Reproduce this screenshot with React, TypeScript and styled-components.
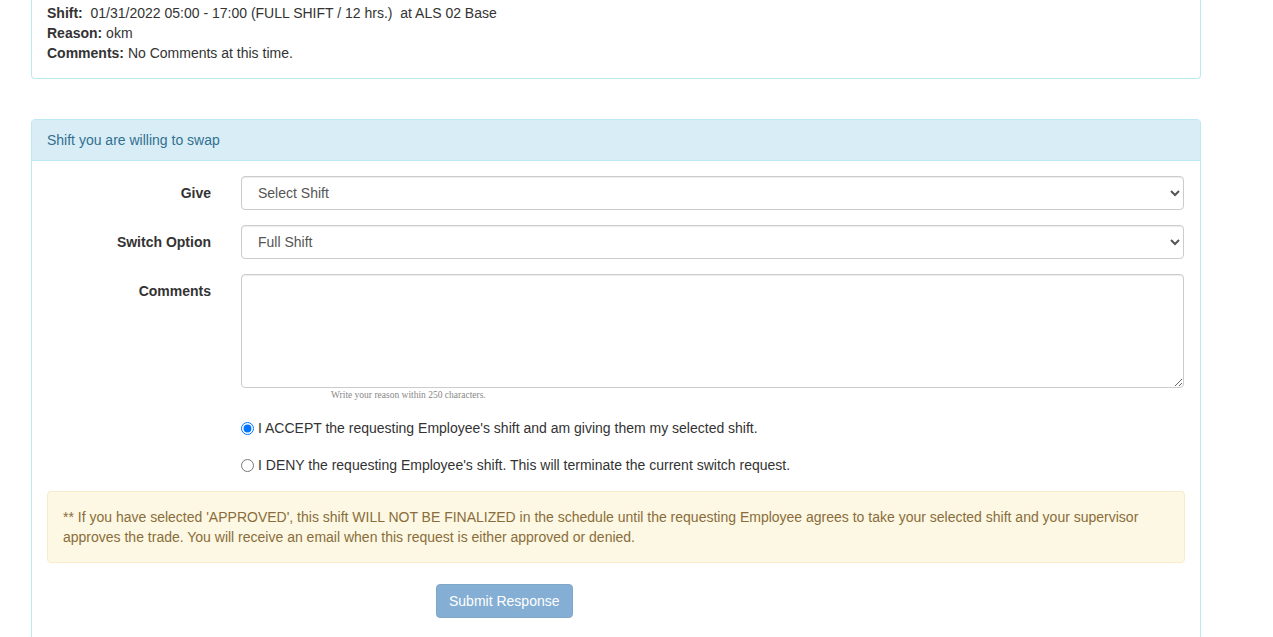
import React from 'react'
import styled, { createGlobalStyle } from 'styled-components'

const GlobalStyle = createGlobalStyle`
  html, body {
    margin: 0;
    padding: 0;
    background: #fff;
  }
  body {
    font-family: "Liberation Sans", Arial, Helvetica, sans-serif;
    font-size: 14px;
    line-height: 20px;
    color: #333;
  }
  * {
    box-sizing: border-box;
  }
`

const Page = styled.div`
  width: 1170px;
  margin-left: 31px;
`

const Panel = styled.div<{ $cutTop?: boolean }>`
  border: 1px solid #bce8f1;
  border-radius: 4px;
  background: #fff;
  margin-bottom: 40px;

  ${({ $cutTop }) =>
    $cutTop &&
    `
      border-top: none;
      border-top-left-radius: 0;
      border-top-right-radius: 0;
    `}
`

const PanelHeading = styled.div`
  background: #d9edf7;
  color: #31708f;
  padding: 10px 15px;
  border-bottom: 1px solid #bce8f1;
  border-top-left-radius: 3px;
  border-top-right-radius: 3px;
`

const PanelBody = styled.div<{ $top?: number }>`
  padding: ${({ $top = 15 }) => `${$top}px`} 16px 15px 15px;
`

const InfoLine = styled.div`
  line-height: 20px;
  white-space: pre;
`

const Strong = styled.b`
  font-weight: bold;
`

const FormRow = styled.div<{ $last?: boolean }>`
  display: grid;
  grid-template-columns: 164px 1fr;
  column-gap: 30px;
  margin-bottom: ${({ $last }) => ($last ? '0' : '15px')};
`

const Label = styled.label`
  font-weight: bold;
  text-align: right;
  padding-top: 7px;
`

const Select = styled.select`
  width: 100%;
  height: 34px;
  padding: 6px 12px;
  font-family: "Liberation Sans", Arial, sans-serif;
  font-size: 14px;
  color: #555;
  background: #fff;
  border: 1px solid #ccc;
  border-radius: 4px;
  box-shadow: inset 0 1px 1px rgba(0, 0, 0, 0.075);
`

const TextArea = styled.textarea`
  display: block;
  width: 100%;
  height: 114px;
  padding: 6px 12px;
  font-family: "Liberation Sans", Arial, sans-serif;
  font-size: 14px;
  color: #555;
  border: 1px solid #ccc;
  border-radius: 4px;
  box-shadow: inset 0 1px 1px rgba(0, 0, 0, 0.075);
`

const Hint = styled.small`
  display: block;
  padding-left: 90px;
  margin-top: 1px;
  font-family: "Liberation Serif", "Times New Roman", serif;
  font-size: 9.5px;
  line-height: 12px;
  color: #888;
`

const RadioGroup = styled.div`
  display: grid;
  grid-template-columns: 164px 1fr;
  column-gap: 30px;
  margin-top: 17px;
`

const RadioList = styled.div`
  display: flex;
  flex-direction: column;
  gap: 17px;
`

const RadioLabel = styled.label`
  display: flex;
  align-items: center;
  gap: 4px;
  line-height: 20px;
`

const Radio = styled.input`
  margin: 0;
  width: 13px;
  height: 13px;
`

const Alert = styled.div`
  margin: 16px -1px 0 0;
  padding: 15px;
  background: #fcf8e3;
  border: 1px solid #faebcc;
  border-radius: 4px;
  color: #8a6d3b;
  line-height: 20px;
`

const ButtonRow = styled.div`
  display: flex;
  padding-left: 389px;
  margin-top: 21px;
  padding-bottom: 30px;
`

const SubmitButton = styled.button`
  height: 34px;
  padding: 6px 12px;
  font-family: "Liberation Sans", Arial, sans-serif;
  font-size: 14px;
  color: #fff;
  background: #337ab7;
  border: 1px solid #2e6da4;
  border-radius: 4px;
  opacity: 0.6;
  cursor: not-allowed;
`

export default function App() {
  return (
    <>
      <GlobalStyle />
      <Page>
        <Panel $cutTop>
          <PanelBody $top={3}>
            <InfoLine>
              <Strong>Shift:</Strong>
              {'  01/31/2022 05:00 - 17:00 (FULL SHIFT / 12 hrs.)  at ALS 02 Base'}
            </InfoLine>
            <InfoLine>
              <Strong>Reason:</Strong> okm
            </InfoLine>
            <InfoLine>
              <Strong>Comments:</Strong> No Comments at this time.
            </InfoLine>
          </PanelBody>
        </Panel>

        <Panel>
          <PanelHeading>Shift you are willing to swap</PanelHeading>
          <PanelBody>
            <FormRow>
              <Label>Give</Label>
              <Select defaultValue="">
                <option value="">Select Shift</option>
              </Select>
            </FormRow>
            <FormRow>
              <Label>Switch Option</Label>
              <Select defaultValue="full">
                <option value="full">Full Shift</option>
                <option value="partial">Partial Shift</option>
              </Select>
            </FormRow>
            <FormRow $last>
              <Label>Comments</Label>
              <div>
                <TextArea />
                <Hint>Write your reason within 250 characters.</Hint>
              </div>
            </FormRow>
            <RadioGroup>
              <span />
              <RadioList>
                <RadioLabel>
                  <Radio type="radio" name="response" defaultChecked />
                  I ACCEPT the requesting Employee's shift and am giving them my selected shift.
                </RadioLabel>
                <RadioLabel>
                  <Radio type="radio" name="response" />
                  I DENY the requesting Employee's shift. This will terminate the current switch request.
                </RadioLabel>
              </RadioList>
            </RadioGroup>
            <Alert>
              ** If you have selected 'APPROVED', this shift WILL NOT BE FINALIZED in the schedule until the
              requesting Employee agrees to take your selected shift and your supervisor approves the trade. You
              will receive an email when this request is either approved or denied.
            </Alert>
            <ButtonRow>
              <SubmitButton disabled>Submit Response</SubmitButton>
            </ButtonRow>
          </PanelBody>
        </Panel>
      </Page>
    </>
  )
}
